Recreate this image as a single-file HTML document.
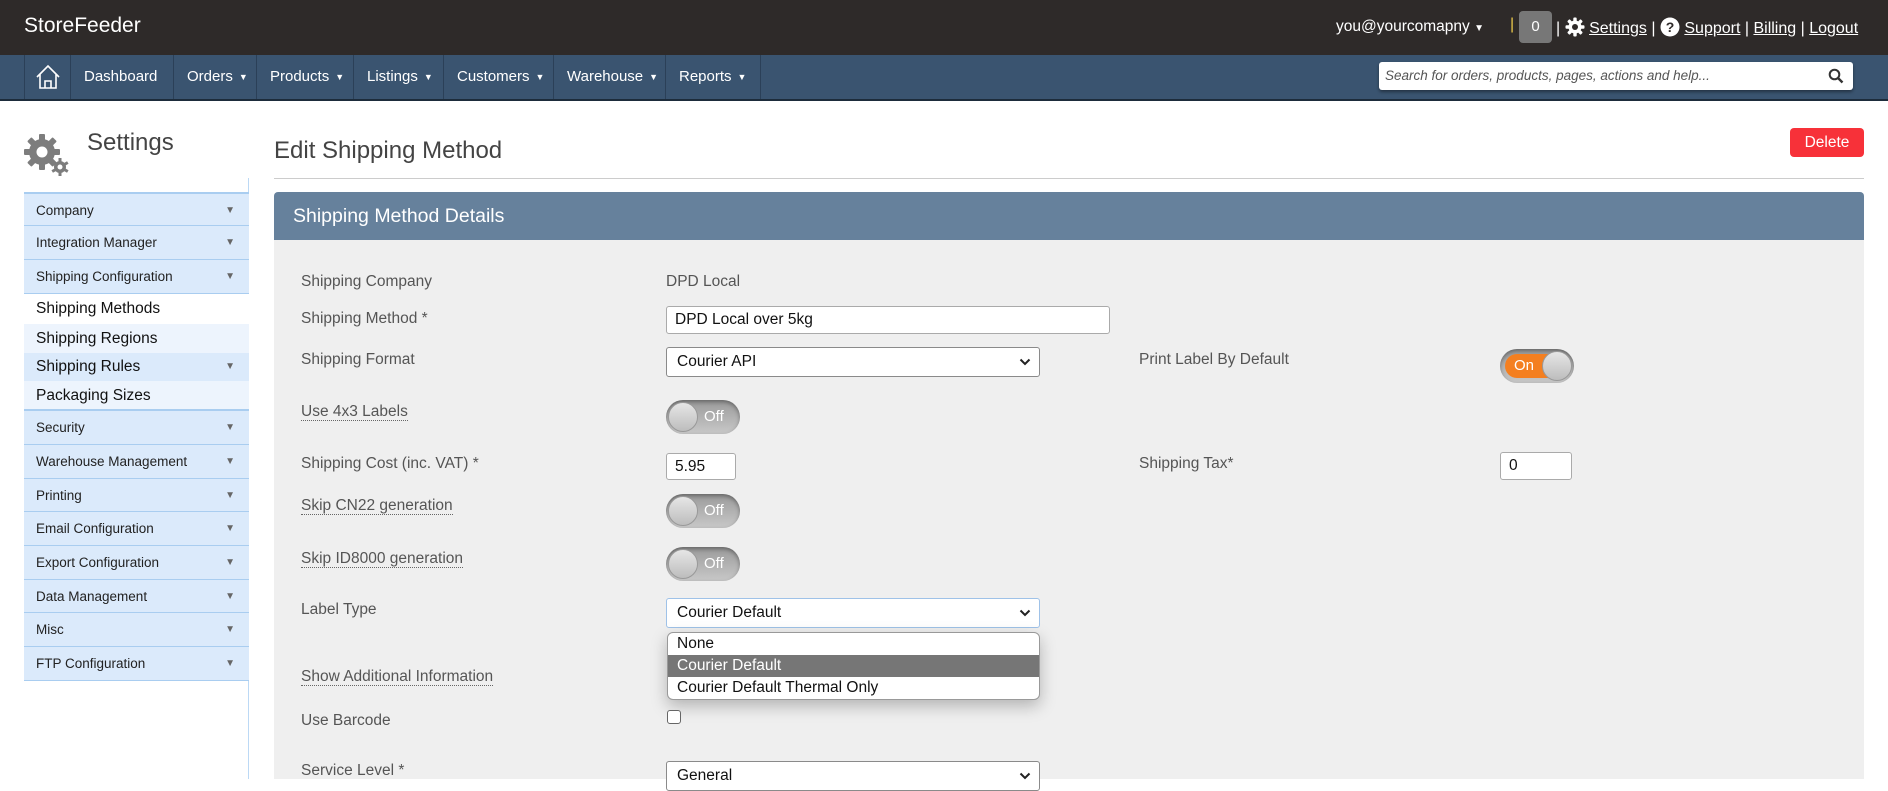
<!DOCTYPE html>
<html><head><meta charset="utf-8"><style>
*{box-sizing:border-box;margin:0;padding:0}
body{width:1888px;height:779px;overflow:hidden;background:#fff;font-family:"Liberation Sans",sans-serif;position:relative}
.a{position:absolute}
#top{left:0;top:0;width:1888px;height:55px;background:#2e2a29;color:#fff}
#nav{left:0;top:55px;width:1888px;height:46px;background:#3a5470;border-bottom:2px solid #1d2c3b}
.ni{position:absolute;top:0;height:44px;line-height:44px;color:#fff;font-size:15px;border-left:1px solid #2b4058;padding-left:13px}
.car{font-size:9px;margin-left:6px;vertical-align:1px}
.sb{position:absolute;left:24px;width:225px;font-size:13.5px;color:#222;padding-left:12px;border-bottom:1px solid #a9cdf0;background:#dbeafb}
.sb .c{position:absolute;right:14px;font-size:10px;color:#666}
.sub{font-size:15.5px;color:#111}
.lbl{position:absolute;left:301px;font-size:15.5px;color:#555}
.u{border-bottom:1px dotted #666}
.inp{position:absolute;background:#fff;border:1px solid #aaa;border-radius:3px;font-size:15.5px;color:#111;padding-left:8px}
.sel{position:absolute;background:#fff;border:1px solid #8a8a8a;border-radius:3px;font-size:15.5px;color:#111;padding-left:10px}
.sel svg{position:absolute;right:8px;top:50%;margin-top:-4px}
.tg{position:absolute;width:74px;height:34px;border-radius:17px;background:linear-gradient(#9a9a9a,#c8c8c8);box-shadow:inset 0 2px 4px rgba(0,0,0,.35)}
.tg .k{position:absolute;top:2px;width:30px;height:30px;border-radius:50%;background:linear-gradient(#e6e6e6,#bdbdbd);border:1px solid #999}
.tg .t{position:absolute;top:8px;color:#fff;font-size:15px}
</style></head><body>
<div id="top" class="a">
 <div class="a" style="left:24px;top:14px;font-size:21px">StoreFeeder</div>
 <div class="a" style="left:1336px;top:18px;font-size:15.5px;white-space:nowrap">you@yourcomapny <span style="font-size:10px">▼</span></div>
 <div class="a" style="left:1510px;top:16px;font-size:16px;color:#e8c64a">|</div>
 <div class="a" style="left:1519px;top:11px;width:33px;height:32px;background:#777;border-radius:4px;text-align:center;line-height:32px;font-size:15px">0</div>
 <div class="a" style="left:1556px;top:17px;font-size:16px;white-space:nowrap">|
  <svg width="20" height="20" viewBox="0 0 20 20" style="vertical-align:-4px"><g fill="#fff"><circle cx="10" cy="10" r="6.5"/><rect x="8.3" y="0.5" width="3.4" height="19" rx="1"/><rect x="8.3" y="0.5" width="3.4" height="19" rx="1" transform="rotate(45 10 10)"/><rect x="8.3" y="0.5" width="3.4" height="19" rx="1" transform="rotate(90 10 10)"/><rect x="8.3" y="0.5" width="3.4" height="19" rx="1" transform="rotate(135 10 10)"/></g><circle cx="10" cy="10" r="3" fill="#2e2a29"/></svg>
  <u>Settings</u> | <svg width="20" height="20" viewBox="0 0 20 20" style="vertical-align:-4px"><circle cx="10" cy="10" r="9.5" fill="#fff"/><text x="10" y="15" text-anchor="middle" font-size="14" font-weight="bold" fill="#2e2a29" font-family="Liberation Sans">?</text></svg> <u>Support</u> | <u>Billing</u> | <u>Logout</u></div>
</div>
<div id="nav" class="a">
 <div class="ni" style="left:24px;width:46px;padding:0"><svg width="46" height="44" viewBox="0 0 46 44"><path d="M12 22 L23 11 L34 22 M15 19 V33 H31 V19 M20 33 V26 H26 V33" fill="none" stroke="#fff" stroke-width="1.6"/></svg></div>
 <div class="ni" style="left:70px;width:103px">Dashboard</div>
 <div class="ni" style="left:173px;width:83px">Orders<span class="car">▼</span></div>
 <div class="ni" style="left:256px;width:97px">Products<span class="car">▼</span></div>
 <div class="ni" style="left:353px;width:90px">Listings<span class="car">▼</span></div>
 <div class="ni" style="left:443px;width:110px">Customers<span class="car">▼</span></div>
 <div class="ni" style="left:553px;width:112px">Warehouse<span class="car">▼</span></div>
 <div class="ni" style="left:665px;width:96px;border-right:1px solid #2b4058">Reports<span class="car">▼</span></div>
 <div class="a" style="left:1379px;top:7px;width:474px;height:28px;background:#fff;border-radius:3px;box-shadow:0 2px 3px rgba(0,0,0,.4)">
  <span class="a" style="left:6px;top:6px;font-size:13.5px;font-style:italic;color:#555">Search for orders, products, pages, actions and help...</span>
  <svg class="a" style="right:9px;top:6px" width="16" height="16" viewBox="0 0 16 16"><circle cx="6.5" cy="6.5" r="4.8" fill="none" stroke="#333" stroke-width="2"/><path d="M10 10 L14.5 14.5" stroke="#333" stroke-width="2.4"/></svg>
 </div>
</div>

<svg class="a" style="left:22px;top:132px" width="52" height="46" viewBox="0 0 52 46"><g fill="#7d7d7d"><circle cx="20" cy="20" r="13"/><g><rect x="17" y="2" width="6" height="36" rx="1"/><rect x="17" y="2" width="6" height="36" rx="1" transform="rotate(45 20 20)"/><rect x="17" y="2" width="6" height="36" rx="1" transform="rotate(90 20 20)"/><rect x="17" y="2" width="6" height="36" rx="1" transform="rotate(135 20 20)"/></g><circle cx="38" cy="35" r="6"/><g><rect x="36.5" y="26" width="3" height="18"/><rect x="36.5" y="26" width="3" height="18" transform="rotate(60 38 35)"/><rect x="36.5" y="26" width="3" height="18" transform="rotate(120 38 35)"/></g></g><circle cx="20" cy="20" r="5.5" fill="#fff"/><circle cx="38" cy="35" r="2.5" fill="#fff"/></svg>
<div class="a" style="left:87px;top:129px;font-size:24px;color:#444">Settings</div>
<div class="a" style="left:248px;top:178px;width:1px;height:601px;background:#bcd9f5"></div>

<div class="sb" style="top:192px;height:34px;line-height:34px;border-top:2px solid #a9cdf0">Company<span class="c">▼</span></div>
<div class="sb" style="top:226px;height:34px;line-height:34px">Integration Manager<span class="c">▼</span></div>
<div class="sb" style="top:260px;height:34px;line-height:34px">Shipping Configuration<span class="c">▼</span></div>
<div class="sb sub" style="top:294px;height:30px;line-height:30px;background:#fff;border:none">Shipping Methods</div>
<div class="sb sub" style="top:324px;height:29px;line-height:29px;background:#edf4fd;border:none">Shipping Regions</div>
<div class="sb sub" style="top:353px;height:28px;line-height:28px;border:none">Shipping Rules<span class="c">▼</span></div>
<div class="sb sub" style="top:381px;height:30px;line-height:30px;background:#edf4fd;border-bottom:2px solid #a9cdf0">Packaging Sizes</div>
<div class="sb" style="top:411px;height:34px;line-height:34px">Security<span class="c">▼</span></div>
<div class="sb" style="top:445px;height:34px;line-height:34px">Warehouse Management<span class="c">▼</span></div>
<div class="sb" style="top:479px;height:33px;line-height:33px">Printing<span class="c">▼</span></div>
<div class="sb" style="top:512px;height:34px;line-height:34px">Email Configuration<span class="c">▼</span></div>
<div class="sb" style="top:546px;height:34px;line-height:34px">Export Configuration<span class="c">▼</span></div>
<div class="sb" style="top:580px;height:33px;line-height:33px">Data Management<span class="c">▼</span></div>
<div class="sb" style="top:613px;height:34px;line-height:34px">Misc<span class="c">▼</span></div>
<div class="sb" style="top:647px;height:34px;line-height:34px">FTP Configuration<span class="c">▼</span></div>

<div class="a" style="left:274px;top:137px;font-size:24px;color:#444">Edit Shipping Method</div>
<div class="a" style="left:1790px;top:128px;width:74px;height:29px;background:#f73139;border-radius:4px;color:#fff;font-size:15.5px;text-align:center;line-height:29px">Delete</div>
<div class="a" style="left:274px;top:178px;width:1590px;height:1px;background:#ccc"></div>
<div class="a" style="left:274px;top:192px;width:1590px;height:48px;background:#66819c;border-radius:4px 4px 0 0;color:#fff;font-size:19.5px;padding:13px 0 0 19px">Shipping Method Details</div>
<div class="a" style="left:274px;top:240px;width:1590px;height:539px;background:#efefef"></div>

<div class="lbl" style="top:273px">Shipping Company</div>
<div class="a" style="left:666px;top:273px;font-size:15.5px;color:#555">DPD Local</div>
<div class="lbl" style="top:310px">Shipping Method *</div>
<div class="inp" style="left:666px;top:306px;width:444px;height:28px;line-height:26px">DPD Local over 5kg</div>
<div class="lbl" style="top:351px">Shipping Format</div>
<div class="sel" style="left:666px;top:347px;width:374px;height:30px;line-height:28px">Courier API<svg width="12" height="8" viewBox="0 0 12 8"><path d="M1.5 1.5 L6 6 L10.5 1.5" fill="none" stroke="#222" stroke-width="2"/></svg></div>
<div class="a" style="left:1139px;top:351px;font-size:15.5px;color:#555">Print Label By Default</div>
<div class="tg" style="left:1500px;top:349px"><div class="a" style="left:5px;top:5px;width:62px;height:24px;border-radius:12px;background:#f47f20"></div><span class="t" style="left:14px">On</span><div class="k" style="right:2px"></div></div>

<div class="lbl" style="top:403px"><span class="u">Use 4x3 Labels</span></div>
<div class="tg" style="left:666px;top:400px"><span class="t" style="left:38px">Off</span><div class="k" style="left:2px"></div></div>

<div class="lbl" style="top:455px">Shipping Cost (inc. VAT) *</div>
<div class="inp" style="left:666px;top:453px;width:70px;height:27px;line-height:25px">5.95</div>
<div class="a" style="left:1139px;top:455px;font-size:15.5px;color:#555">Shipping Tax*</div>
<div class="inp" style="left:1500px;top:452px;width:72px;height:28px;line-height:26px">0</div>

<div class="lbl" style="top:497px"><span class="u">Skip CN22 generation</span></div>
<div class="tg" style="left:666px;top:494px"><span class="t" style="left:38px">Off</span><div class="k" style="left:2px"></div></div>
<div class="lbl" style="top:550px"><span class="u">Skip ID8000 generation</span></div>
<div class="tg" style="left:666px;top:547px"><span class="t" style="left:38px">Off</span><div class="k" style="left:2px"></div></div>

<div class="lbl" style="top:601px">Label Type</div>
<div class="sel" style="left:666px;top:598px;width:374px;height:30px;line-height:28px;border-color:#9fc2e8">Courier Default<svg width="12" height="8" viewBox="0 0 12 8"><path d="M1.5 1.5 L6 6 L10.5 1.5" fill="none" stroke="#222" stroke-width="2"/></svg></div>
<div class="a" style="left:667px;top:632px;width:373px;height:68px;background:#fff;border:1px solid #999;border-radius:6px;box-shadow:0 6px 16px rgba(0,0,0,.25);overflow:hidden;font-size:15.5px;color:#111">
 <div style="height:22px;line-height:22px;padding-left:9px">None</div>
 <div style="height:22px;line-height:22px;padding-left:9px;background:#767676;color:#fff">Courier Default</div>
 <div style="height:22px;line-height:22px;padding-left:9px">Courier Default Thermal Only</div>
</div>

<div class="lbl" style="top:668px"><span class="u">Show Additional Information</span></div>
<div class="lbl" style="top:712px">Use Barcode</div>
<div class="a" style="left:667px;top:710px;width:14px;height:14px;border:1.5px solid #666;border-radius:3px;background:#fff"></div>
<div class="lbl" style="top:762px">Service Level *</div>
<div class="sel" style="left:666px;top:761px;width:374px;height:30px;line-height:28px">General<svg width="12" height="8" viewBox="0 0 12 8"><path d="M1.5 1.5 L6 6 L10.5 1.5" fill="none" stroke="#222" stroke-width="2"/></svg></div>
</body></html>
